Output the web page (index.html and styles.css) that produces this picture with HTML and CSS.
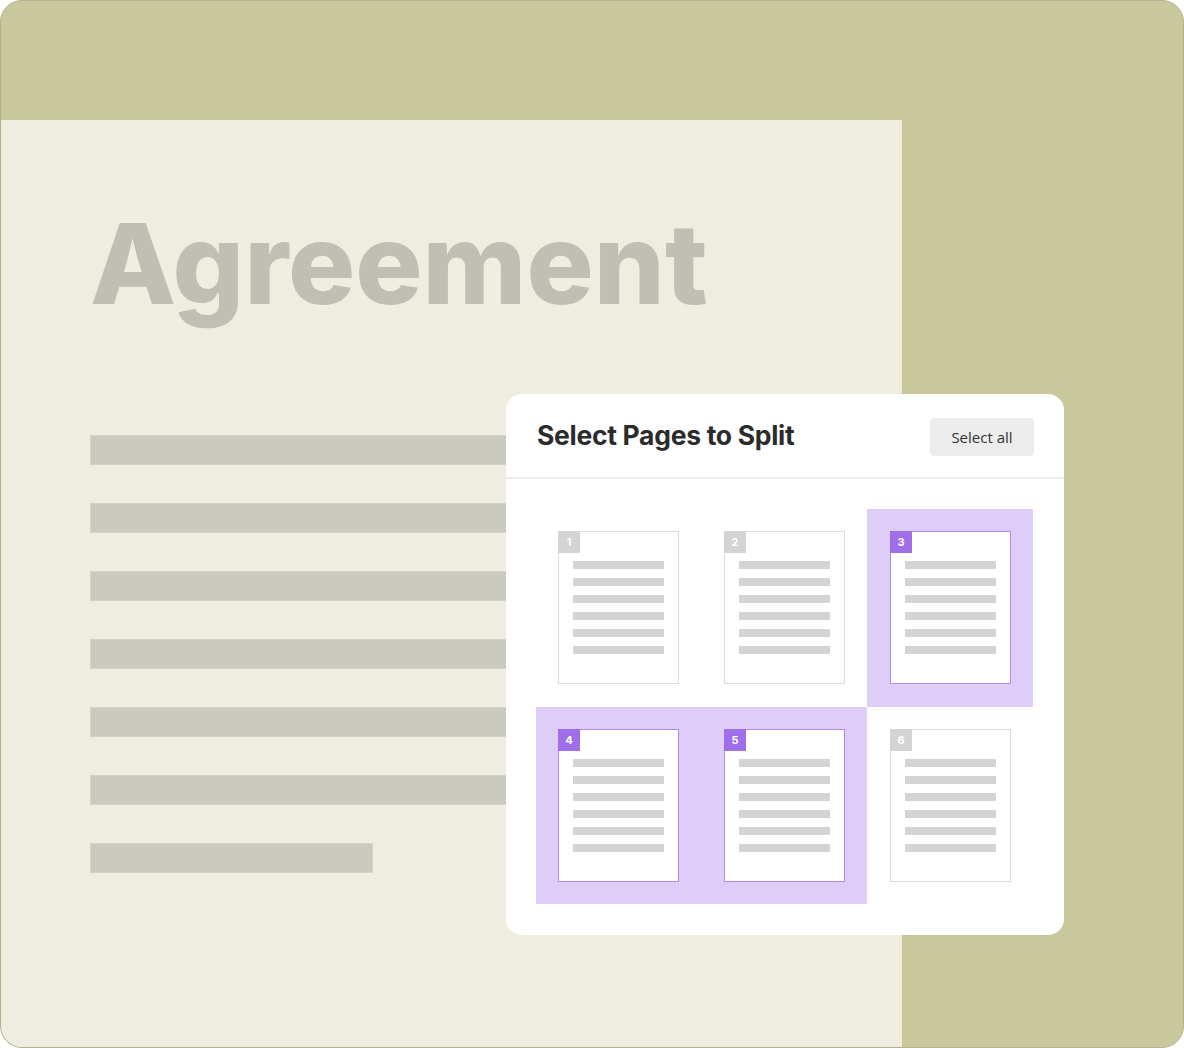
FILE: index.html
```html
<!DOCTYPE html>
<html>
<head>
<meta charset="utf-8">
<link rel="stylesheet" href="styles.css">
</head>
<body>
<div class="frame">
  <div class="doc">
    <h1 class="doc-title">Agreement</h1>
    <div class="doc-lines">
      <div class="bar"></div>
      <div class="bar"></div>
      <div class="bar"></div>
      <div class="bar"></div>
      <div class="bar"></div>
      <div class="bar"></div>
      <div class="bar short"></div>
    </div>
  </div>
  <div class="modal">
    <div class="modal-head">
      <h2 class="modal-title">Select Pages to Split</h2>
      <button class="btn">Select all</button>
    </div>
    <div class="grid">
      <div class="cell"><div class="page"><span class="badge">1</span><div class="plines"><i></i><i></i><i></i><i></i><i></i><i></i></div></div></div>
      <div class="cell"><div class="page"><span class="badge">2</span><div class="plines"><i></i><i></i><i></i><i></i><i></i><i></i></div></div></div>
      <div class="cell sel"><div class="page"><span class="badge">3</span><div class="plines"><i></i><i></i><i></i><i></i><i></i><i></i></div></div></div>
      <div class="cell sel"><div class="page"><span class="badge">4</span><div class="plines"><i></i><i></i><i></i><i></i><i></i><i></i></div></div></div>
      <div class="cell sel"><div class="page"><span class="badge">5</span><div class="plines"><i></i><i></i><i></i><i></i><i></i><i></i></div></div></div>
      <div class="cell"><div class="page"><span class="badge">6</span><div class="plines"><i></i><i></i><i></i><i></i><i></i><i></i></div></div></div>
    </div>
  </div>
</div>
</body>
</html>
```

FILE: styles.css
```css
* { box-sizing: border-box; }
html, body { margin: 0; padding: 0; background: #ffffff; }
body { font-family: Inter, "Noto Sans", sans-serif; }

.frame {
  position: relative;
  width: 1184px;
  height: 1048px;
  background: #c9c79c;
  border: 1px solid #b4b28e;
  border-radius: 22px;
  overflow: hidden;
  padding-top: 119px;
}

.doc {
  width: 901px;
  height: 928px;
  background: #efede0;
  padding: 0 0 0 89px;
  display: flex;
  flex-direction: column;
}

.doc-title {
  margin: 75px 0 0 0;
  font-size: 112px;
  font-weight: 800;
  letter-spacing: 0px;
  line-height: 136px;
  color: #bfbfb4;
}

.doc-lines {
  margin-top: 104px;
  display: flex;
  flex-direction: column;
  gap: 38px;
}

.bar {
  width: 420px;
  height: 30px;
  background: #c9c9bd;
  border: 1px solid #d3d2c5;
}
.bar.short { width: 283px; }

.modal {
  position: absolute;
  left: 505px;
  top: 393px;
  width: 558px;
  height: 541px;
  background: #ffffff;
  border-radius: 16px;
  overflow: hidden;
}

.modal-head {
  height: 85px;
  border-bottom: 2px solid #ececec;
  display: flex;
  align-items: center;
  justify-content: space-between;
  padding: 0 30px 0 31px;
}

.modal-title {
  margin: 0 0 2px 0;
  font-size: 26.5px;
  font-weight: 700;
  color: #2b2b2b;
  letter-spacing: -0.3px;
}

.btn {
  font-family: "Open Sans", "Noto Sans", sans-serif;
  width: 104px;
  height: 38px;
  border: none;
  background: #ececec;
  border-radius: 4px;
  font-size: 15px;
  color: #333333;
  padding: 0;
  margin-top: 2px;
}

.grid {
  margin: 30px 30px 0 30px;
  width: 497px;
  height: 395px;
  display: grid;
  grid-template-columns: 166px 165px 166px;
  grid-template-rows: 198px 197px;
}

.cell { padding: 22px 0 0 22px; }
.cell:nth-child(3n) { padding-left: 23px; }
.cell.sel { background: #ddcdf8; }

.page {
  position: relative;
  width: 121px;
  height: 153px;
  background: #ffffff;
  border: 1px solid #dcdcdc;
  padding: 29px 0 0 14px;
}
.sel .page { border-color: #b08af0; }

.badge {
  position: absolute;
  left: -1px;
  top: -1px;
  width: 22px;
  height: 22px;
  background: #d4d4d4;
  color: #ffffff;
  font-size: 11px;
  font-weight: 700;
  line-height: 22px;
  text-align: center;
}
.sel .badge { background: #a06ee8; }

.plines {
  display: flex;
  flex-direction: column;
  gap: 9px;
}
.plines i {
  display: block;
  width: 91px;
  height: 8px;
  background: #d4d4d4;
}
```
